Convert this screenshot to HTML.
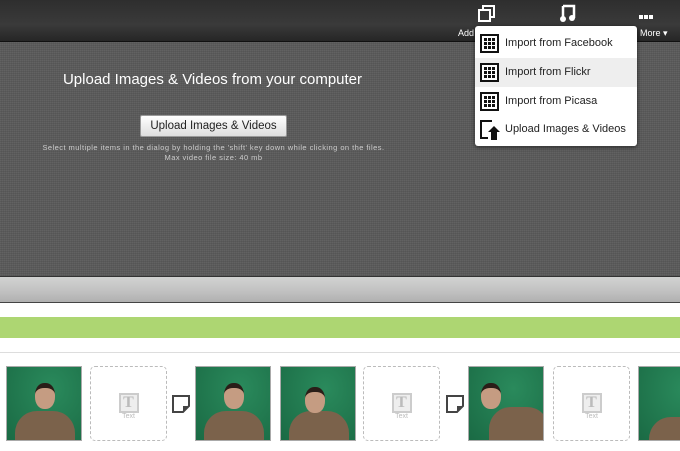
<!DOCTYPE html><html><head><style>
*{margin:0;padding:0;box-sizing:border-box}
body{width:680px;height:451px;overflow:hidden;background:#fff;font-family:"Liberation Sans",sans-serif;position:relative}
.top{position:absolute;left:0;top:0;width:680px;height:42px;background:linear-gradient(#2e2e2e,#3a3a3a 60%,#262626);border-bottom:1px solid #111}
.tex{position:absolute;left:0;top:42px;width:680px;height:234px;background-color:#5c5c5c;background-image:repeating-linear-gradient(0deg,rgba(0,0,0,.08) 0 1px,transparent 1px 2px),repeating-linear-gradient(90deg,rgba(255,255,255,.04) 0 1px,transparent 1px 2px)}
.gbar{position:absolute;left:0;top:276px;width:680px;height:27px;background:linear-gradient(#d2d3d2,#c0c0c0 60%,#b0b0b0);border-top:1px solid #333;border-bottom:1px solid #444}
.green{position:absolute;left:0;top:317px;width:680px;height:21px;background:#add672}
.line{position:absolute;left:0;top:352px;width:680px;height:1px;background:#ddd}
h1{position:absolute;left:0;width:425px;top:71px;text-align:center;color:#fff;font-size:15px;font-weight:normal}
.btn{position:absolute;left:140px;top:115px;width:147px;height:22px;background:linear-gradient(#fff,#ddd);border:1px solid #999;border-radius:2px;font-size:11.5px;text-align:center;line-height:20px;color:#222}
.small{position:absolute;left:0;width:427px;top:143px;text-align:center;color:#ccc;font-size:7.5px;line-height:10px;letter-spacing:.45px}
.lbl{position:absolute;color:#fff;font-size:9px;top:28px}
.menu{position:absolute;left:475px;top:26px;width:162px;height:120px;background:#fff;border-radius:3px;box-shadow:0 1px 4px rgba(0,0,0,.6)}
.mi{position:absolute;left:0;width:162px;height:29px;font-size:11px;color:#222;line-height:29px;padding-left:30px}
.mi.h{background:#eee}
.gi{position:absolute;left:5px;top:5px;width:19px;height:19px;border:2px solid #111;background:#fff;display:grid;grid-template-columns:repeat(3,1fr);gap:1px;padding:2px}
.gi i{background:#111}
.ph{position:absolute;top:366px;width:76px;height:75px;border:1px solid #aaa;background:radial-gradient(ellipse at 60% 30%,#2a8a5c,#1a6a44);overflow:hidden}
.ph .b{position:absolute;left:8px;top:44px;width:60px;height:40px;background:#7b624b;border-radius:22px 22px 0 0}
.ph .f{position:absolute;left:28px;top:16px;width:20px;height:26px;background:#c59c82;border-radius:45%;border-top:5px solid #2a1e18}
.tb{position:absolute;top:366px;width:77px;height:75px;border:1px dashed #bbb;border-radius:5px;text-align:center}
.tb .t{margin:26px auto 0;width:20px;height:20px;border:2px solid #ccc;background:#eee;color:#bbb;font:bold 16px "Liberation Serif",serif;line-height:16px}
.tb .s{font-size:7px;color:#bbb}
.note{position:absolute;top:395px}
</style></head><body>
<div class="top"></div>
<div class="tex"></div>
<div class="gbar"></div>
<div class="green"></div>
<div class="line"></div>
<h1>Upload Images &amp; Videos from your computer</h1>
<div class="btn">Upload Images &amp; Videos</div>
<div class="small">Select multiple items in the dialog by holding the 'shift' key down while clicking on the files.<br>Max video file size: 40 mb</div>
<svg style="position:absolute;left:478px;top:5px" width="18" height="18"><rect x="1" y="5" width="11" height="11" fill="none" stroke="#fff" stroke-width="2"/><path d="M5 5V1h11v11h-4" fill="none" stroke="#fff" stroke-width="2"/></svg>
<svg style="position:absolute;left:560px;top:4px" width="16" height="18"><path d="M3 2h11v12" fill="none" stroke="#fff" stroke-width="2.5"/><path d="M3 2v12" stroke="#fff" stroke-width="2.5"/><circle cx="3" cy="15" r="3" fill="#fff"/><circle cx="12" cy="14" r="3" fill="#fff"/></svg>
<div style="position:absolute;left:639px;top:15px;width:14px;height:4px;background:repeating-linear-gradient(90deg,#fff 0 4px,transparent 4px 5px)"></div>
<div class="lbl" style="left:458px">Add</div>
<div class="lbl" style="left:640px">More ▾</div>
<div class="menu">
<div class="mi" style="top:3px"><div class="gi"><i></i><i></i><i></i><i></i><i></i><i></i><i></i><i></i><i></i></div>Import from Facebook</div>
<div class="mi h" style="top:32px"><div class="gi"><i></i><i></i><i></i><i></i><i></i><i></i><i></i><i></i><i></i></div>Import from Flickr</div>
<div class="mi" style="top:61px"><div class="gi"><i></i><i></i><i></i><i></i><i></i><i></i><i></i><i></i><i></i></div>Import from Picasa</div>
<div class="mi" style="top:89px"><svg style="position:absolute;left:5px;top:5px" width="20" height="20"><path d="M12 1H1v17h7" fill="none" stroke="#111" stroke-width="2"/><path d="M8 12l6-6 6 6h-3v8h-6v-8z" fill="#111"/></svg>Upload Images &amp; Videos</div>
</div>
<div class="ph" style="left:6px"><div class="b"></div><div class="f"></div></div>
<div class="tb" style="left:90px"><div class="t">T</div><div class="s">Text</div></div>
<svg class="note" style="left:172px" width="18" height="18"><path d="M1 1h16v10l-6 6H1z" fill="#fff" stroke="#444" stroke-width="2"/><path d="M17 11h-6v6z" fill="#444"/></svg>
<div class="ph" style="left:195px"><div class="b"></div><div class="f"></div></div>
<div class="ph" style="left:280px"><div class="b"></div><div class="f" style="left:24px;top:20px"></div></div>
<div class="tb" style="left:363px"><div class="t">T</div><div class="s">Text</div></div>
<svg class="note" style="left:446px" width="18" height="18"><path d="M1 1h16v10l-6 6H1z" fill="#fff" stroke="#444" stroke-width="2"/><path d="M17 11h-6v6z" fill="#444"/></svg>
<div class="ph" style="left:468px"><div class="b" style="left:20px;top:40px"></div><div class="f" style="left:12px;top:16px"></div></div>
<div class="tb" style="left:553px"><div class="t">T</div><div class="s">Text</div></div>
<div class="ph" style="left:638px"><div class="b" style="left:10px;top:50px"></div></div>
</body></html>
